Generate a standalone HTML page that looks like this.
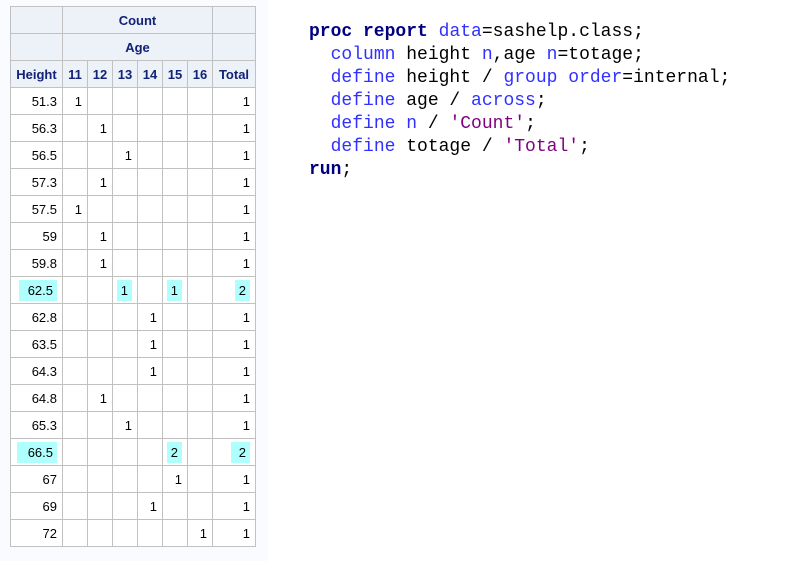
<!DOCTYPE html>
<html><head><style>
html,body{margin:0;padding:0;width:789px;height:561px;background:#fff;overflow:hidden}
.panel{position:absolute;left:0;top:0;width:268px;height:561px;background:#fafbfe}
table{position:absolute;left:10px;top:6px;border-collapse:collapse;font-family:"Liberation Sans",Arial,sans-serif;font-size:13px;table-layout:fixed}
td,th{border:1px solid #c1c1c1;height:27px;padding:0 5px 0 0;text-align:right;background:#fff;color:#000;box-sizing:border-box}
th{background:#edf2f9;color:#112277;font-weight:bold;text-align:center;padding:0}
.h{background:#afffff;display:inline-block;line-height:21px;padding:0 4px;vertical-align:middle}
pre{position:absolute;left:309px;top:21px;margin:0;font-family:"Liberation Mono","Courier New",monospace;font-size:18px;line-height:23px;color:#000}
.k{color:#000080;font-weight:bold}.b{color:#3030ff}.s{color:#800080}
</style></head><body>
<div class="panel"></div>
<table>
<colgroup><col style="width:52px"><col style="width:25px"><col style="width:25px"><col style="width:25px"><col style="width:25px"><col style="width:25px"><col style="width:25px"><col style="width:43px"></colgroup>
<tr><th></th><th colspan="6">Count</th><th></th></tr>
<tr><th></th><th colspan="6">Age</th><th></th></tr>
<tr><th>Height</th><th>11</th><th>12</th><th>13</th><th>14</th><th>15</th><th>16</th><th>Total</th></tr>
<tr><td>51.3</td><td>1</td><td></td><td></td><td></td><td></td><td></td><td>1</td></tr>
<tr><td>56.3</td><td></td><td>1</td><td></td><td></td><td></td><td></td><td>1</td></tr>
<tr><td>56.5</td><td></td><td></td><td>1</td><td></td><td></td><td></td><td>1</td></tr>
<tr><td>57.3</td><td></td><td>1</td><td></td><td></td><td></td><td></td><td>1</td></tr>
<tr><td>57.5</td><td>1</td><td></td><td></td><td></td><td></td><td></td><td>1</td></tr>
<tr><td>59</td><td></td><td>1</td><td></td><td></td><td></td><td></td><td>1</td></tr>
<tr><td>59.8</td><td></td><td>1</td><td></td><td></td><td></td><td></td><td>1</td></tr>
<tr><td><span class="h" style="padding-left:9px">62.5</span></td><td></td><td></td><td><span class="h">1</span></td><td></td><td><span class="h">1</span></td><td></td><td><span class="h">2</span></td></tr>
<tr><td>62.8</td><td></td><td></td><td></td><td>1</td><td></td><td></td><td>1</td></tr>
<tr><td>63.5</td><td></td><td></td><td></td><td>1</td><td></td><td></td><td>1</td></tr>
<tr><td>64.3</td><td></td><td></td><td></td><td>1</td><td></td><td></td><td>1</td></tr>
<tr><td>64.8</td><td></td><td>1</td><td></td><td></td><td></td><td></td><td>1</td></tr>
<tr><td>65.3</td><td></td><td></td><td>1</td><td></td><td></td><td></td><td>1</td></tr>
<tr><td><span class="h" style="padding-left:11px">66.5</span></td><td></td><td></td><td></td><td></td><td><span class="h">2</span></td><td></td><td><span class="h" style="padding-left:8px">2</span></td></tr>
<tr><td>67</td><td></td><td></td><td></td><td></td><td>1</td><td></td><td>1</td></tr>
<tr><td>69</td><td></td><td></td><td></td><td>1</td><td></td><td></td><td>1</td></tr>
<tr><td>72</td><td></td><td></td><td></td><td></td><td></td><td>1</td><td>1</td></tr>
</table>
<pre><span class="k">proc report</span> <span class="b">data</span>=sashelp.class;
  <span class="b">column</span> height <span class="b">n</span>,age <span class="b">n</span>=totage;
  <span class="b">define</span> height / <span class="b">group</span> <span class="b">order</span>=internal;
  <span class="b">define</span> age / <span class="b">across</span>;
  <span class="b">define</span> <span class="b">n</span> / <span class="s">'Count'</span>;
  <span class="b">define</span> totage / <span class="s">'Total'</span>;
<span class="k">run</span>;</pre>
</body></html>
